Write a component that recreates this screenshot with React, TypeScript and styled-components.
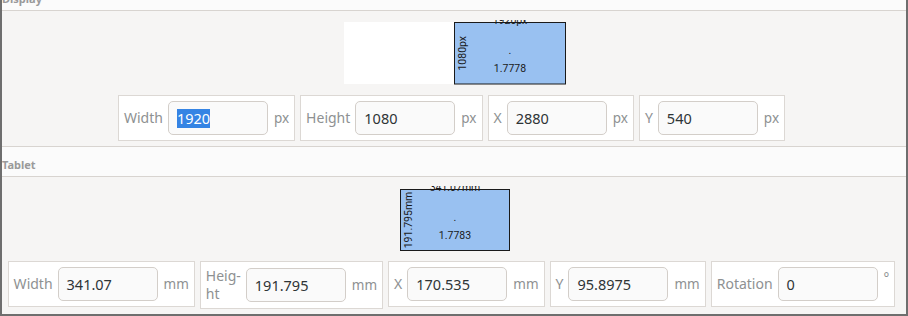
import React, { useLayoutEffect, useRef } from "react";
import styled, { createGlobalStyle } from "styled-components";

const GlobalStyle = createGlobalStyle`
  html, body {
    margin: 0;
    padding: 0;
    background: #f6f5f4;
  }
  body {
    font-family: "Noto Sans", "Open Sans", sans-serif;
  }
`;

type Rect = { x: number; y: number; w: number; h: number };

type FieldData = {
  label: React.ReactNode;
  value: string;
  unit: string;
  selected?: boolean;
};

const displayFields: FieldData[] = [
  { label: "Width", value: "1920", unit: "px", selected: true },
  { label: "Height", value: "1080", unit: "px" },
  { label: "X", value: "2880", unit: "px" },
  { label: "Y", value: "540", unit: "px" },
];

const tabletFields: FieldData[] = [
  { label: "Width", value: "341.07", unit: "mm" },
  {
    label: (
      <>
        Heig-
        <br />
        ht
      </>
    ),
    value: "191.795",
    unit: "mm",
  },
  { label: "X", value: "170.535", unit: "mm" },
  { label: "Y", value: "95.8975", unit: "mm" },
  { label: "Rotation", value: "0", unit: "°" },
];

const Preview = ({
  width,
  box,
  ghost,
  top,
  side,
  ratio,
}: {
  width: number;
  box: Rect;
  ghost?: Rect;
  top: string;
  side: string;
  ratio: string;
}) => {
  const cx = box.x + box.w / 2;
  const cy = box.y + box.h / 2;
  return (
    <Canvas width={width} height={66}>
      {ghost && <rect x={ghost.x} y={ghost.y} width={ghost.w} height={ghost.h} fill="#ffffff" />}
      <rect x={box.x} y={box.y} width={box.w} height={box.h} fill="#99c1f1" stroke="#1a1a1a" strokeWidth={1} />
      <text x={cx} y={box.y + 1.5} textAnchor="middle">
        {top}
      </text>
      <text transform={`translate(${box.x + 11.5} ${cy}) rotate(-90)`} textAnchor="middle">
        {side}
      </text>
      <text x={cx} y={cy + 1} textAnchor="middle">
        .
      </text>
      <text x={cx} y={cy + 18.5} textAnchor="middle">
        {ratio}
      </text>
    </Canvas>
  );
};

const Field = ({ field }: { field: FieldData }) => (
  <FieldBox>
    <Label>{field.label}</Label>
    <Entry>{field.selected ? <Selected>{field.value}</Selected> : field.value}</Entry>
    <Unit $degree={field.unit === "°"}>{field.unit}</Unit>
  </FieldBox>
);

export default function App() {
  const viewRef = useRef<HTMLDivElement>(null);

  // the settings page is scrolled a little, so the first header is half hidden
  useLayoutEffect(() => {
    if (viewRef.current) viewRef.current.scrollTop = 20;
  }, []);

  return (
    <>
      <GlobalStyle />
      <Viewport ref={viewRef}>
        <SectionHeader>Display</SectionHeader>
        <SectionBody $divider>
          <PreviewRow>
            <Preview
              width={226}
              ghost={{ x: 3, y: 2, w: 110.5, h: 62 }}
              box={{ x: 113.5, y: 2.5, w: 111, h: 61.5 }}
              top="1920px"
              side="1080px"
              ratio="1.7778"
            />
          </PreviewRow>
          <FieldRow>
            {displayFields.map((f, i) => (
              <Field key={i} field={f} />
            ))}
          </FieldRow>
        </SectionBody>

        <SectionHeader>Tablet</SectionHeader>
        <SectionBody>
          <PreviewRow>
            <Preview
              width={114}
              box={{ x: 3.5, y: 3.5, w: 109, h: 61 }}
              top="341.07mm"
              side="191.795mm"
              ratio="1.7783"
            />
          </PreviewRow>
          <FieldRow>
            {tabletFields.map((f, i) => (
              <Field key={i} field={f} />
            ))}
          </FieldRow>
        </SectionBody>
      </Viewport>
    </>
  );
}

const Viewport = styled.div`
  box-sizing: border-box;
  width: 908px;
  height: 316px;
  overflow: hidden;
  border: 2px solid #6e6e6e;
  border-top: none;
  background: #f6f5f4;
`;

const SectionHeader = styled.div`
  box-sizing: border-box;
  height: 30px;
  padding-top: 10px;
  background: #fbfbfb;
  border-bottom: 1px solid #d8d4d0;
  font-size: 11px;
  line-height: 15px;
  font-weight: 700;
  color: #9a9a9a;
`;

const SectionBody = styled.div<{ $divider?: boolean }>`
  display: flex;
  flex-direction: column;
  gap: 9px;
  padding: 9px 0 5px;
  background: #f6f5f4;
  border-bottom: ${(p) => (p.$divider ? "1px solid #d8d4d0" : "none")};
`;

const PreviewRow = styled.div`
  display: flex;
  justify-content: center;
`;

const Canvas = styled.svg`
  display: block;
  font-family: Roboto, "Noto Sans", sans-serif;
  font-size: 10.5px;
  fill: #1a1a1a;
`;

const FieldRow = styled.div`
  display: flex;
  justify-content: center;
  align-items: flex-start;
  gap: 5px;
  padding-right: 5px;
`;

const FieldBox = styled.div`
  display: flex;
  align-items: center;
  gap: 5px;
  padding: 5px;
  border: 1px solid #dcd8d4;
  background: #ffffff;
`;

const Label = styled.span`
  font-size: 14px;
  line-height: 18px;
  color: #8e9192;
  white-space: nowrap;
`;

const Entry = styled.div`
  box-sizing: border-box;
  display: flex;
  align-items: center;
  width: 100px;
  height: 34px;
  padding: 0 8px;
  border: 1px solid #d3cec9;
  border-radius: 5px;
  background: #fafafa;
  font-size: 14.5px;
  color: #2e3436;
`;

const Selected = styled.span`
  background: #3584e4;
  color: #ffffff;
  line-height: 19px;
`;

const Unit = styled.span<{ $degree?: boolean }>`
  margin-left: 1px;
  font-size: 13.5px;
  color: #8e9192;
  align-self: ${(p) => (p.$degree ? "flex-start" : "center")};
  padding-top: ${(p) => (p.$degree ? "2px" : "0")};
`;
